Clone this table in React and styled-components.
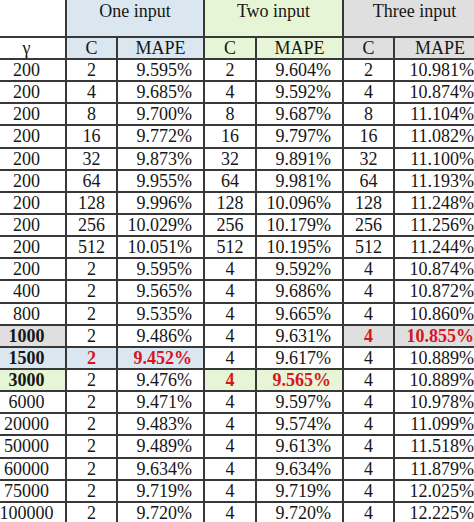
import React from "react";
import styled, { createGlobalStyle } from "styled-components";

const Global = createGlobalStyle`
  html, body { margin: 0; padding: 0; background: #fff; overflow: hidden; }
  body { font-family: "Liberation Serif", "Times New Roman", serif; }
`;

const tones = {
  none: "#ffffff",
  blue: "#dae6f0",
  green: "#e6f5d5",
  gray: "#dfdfdf",
};

const LINE = "2px solid #383838";

const Frame = styled.div`
  width: 474px;
  height: 522px;
  overflow: hidden;
`;

const Table = styled.table`
  border-collapse: collapse;
  table-layout: fixed;
  margin-left: -12px;
  width: 498px;
  font-size: 18px;
  color: #161616;
`;

const Col = styled.col`
  width: ${(p) => p.$w}px;
`;

const GroupRow = styled.tr`
  height: 36.5px;
`;

const SubRow = styled.tr`
  height: 22.5px;
`;

const DataRow = styled.tr`
  height: 22.15px;
`;

const GroupCell = styled.th`
  background: ${(p) => tones[p.$tone || "none"]};
  border-right: ${LINE};
  border-bottom: ${LINE};
  font-weight: normal;
  text-align: center;
  vertical-align: top;
  padding: 0;
  line-height: 22px;
`;

const SubCell = styled.th`
  background: ${(p) => tones[p.$tone || "none"]};
  border-right: ${LINE};
  border-bottom: ${LINE};
  font-weight: normal;
  text-align: center;
  vertical-align: middle;
  padding: 0;
  line-height: 20px;
`;

const Cell = styled.td`
  background: ${(p) => tones[p.$tone || "none"]};
  border-right: ${LINE};
  border-bottom: ${LINE};
  text-align: ${(p) => (p.$num ? "right" : "center")};
  padding: 0 ${(p) => (p.$num ? "11px" : "0")} 0 0;
  line-height: 20px;
  vertical-align: middle;
  white-space: nowrap;
  font-weight: ${(p) => (p.$bold || p.$best ? "bold" : "normal")};
  color: ${(p) => (p.$best ? "#d8141c" : "#161616")};
`;

const rows = [
  ["200", "2", "9.595%", "2", "9.604%", "2", "10.981%"],
  ["200", "4", "9.685%", "4", "9.592%", "4", "10.874%"],
  ["200", "8", "9.700%", "8", "9.687%", "8", "11.104%"],
  ["200", "16", "9.772%", "16", "9.797%", "16", "11.082%"],
  ["200", "32", "9.873%", "32", "9.891%", "32", "11.100%"],
  ["200", "64", "9.955%", "64", "9.981%", "64", "11.193%"],
  ["200", "128", "9.996%", "128", "10.096%", "128", "11.248%"],
  ["200", "256", "10.029%", "256", "10.179%", "256", "11.256%"],
  ["200", "512", "10.051%", "512", "10.195%", "512", "11.244%"],
  ["200", "2", "9.595%", "4", "9.592%", "4", "10.874%"],
  ["400", "2", "9.565%", "4", "9.686%", "4", "10.872%"],
  ["800", "2", "9.535%", "4", "9.665%", "4", "10.860%"],
  ["1000", "2", "9.486%", "4", "9.631%", "4", "10.855%", 3],
  ["1500", "2", "9.452%", "4", "9.617%", "4", "10.889%", 1],
  ["3000", "2", "9.476%", "4", "9.565%", "4", "10.889%", 2],
  ["6000", "2", "9.471%", "4", "9.597%", "4", "10.978%"],
  ["20000", "2", "9.483%", "4", "9.574%", "4", "11.099%"],
  ["50000", "2", "9.489%", "4", "9.613%", "4", "11.518%"],
  ["60000", "2", "9.634%", "4", "9.634%", "4", "11.879%"],
  ["75000", "2", "9.719%", "4", "9.719%", "4", "12.025%"],
  ["100000", "2", "9.720%", "4", "9.720%", "4", "12.225%"],
];

const groupTone = { 1: "blue", 2: "green", 3: "gray" };
const groups = [
  { label: "One input", tone: "blue" },
  { label: "Two input", tone: "green" },
  { label: "Three input", tone: "gray" },
];

export default function App() {
  return (
    <Frame>
      <Global />
      <Table>
        <colgroup>
          <Col $w={78} />
          <Col $w={51} />
          <Col $w={87} />
          <Col $w={52} />
          <Col $w={87} />
          <Col $w={51} />
          <Col $w={92} />
        </colgroup>
        <thead>
          <GroupRow>
            <GroupCell />
            {groups.map((g) => (
              <GroupCell key={g.label} colSpan={2} $tone={g.tone}>
                {g.label}
              </GroupCell>
            ))}
          </GroupRow>
          <SubRow>
            <SubCell>γ</SubCell>
            {groups.map((g) => (
              <React.Fragment key={g.label}>
                <SubCell $tone={g.tone}>C</SubCell>
                <SubCell $tone={g.tone}>MAPE</SubCell>
              </React.Fragment>
            ))}
          </SubRow>
        </thead>
        <tbody>
          {rows.map((r, i) => {
            const best = r[7];
            const tone = best ? groupTone[best] : "none";
            return (
              <DataRow key={i}>
                <Cell $tone={tone} $bold={!!best}>
                  {r[0]}
                </Cell>
                {[1, 2, 3].map((g) => {
                  const hit = best === g;
                  const t = hit ? groupTone[g] : "none";
                  return (
                    <React.Fragment key={g}>
                      <Cell $tone={t} $best={hit}>
                        {r[g * 2 - 1]}
                      </Cell>
                      <Cell $tone={t} $best={hit} $num>
                        {r[g * 2]}
                      </Cell>
                    </React.Fragment>
                  );
                })}
              </DataRow>
            );
          })}
        </tbody>
      </Table>
    </Frame>
  );
}
